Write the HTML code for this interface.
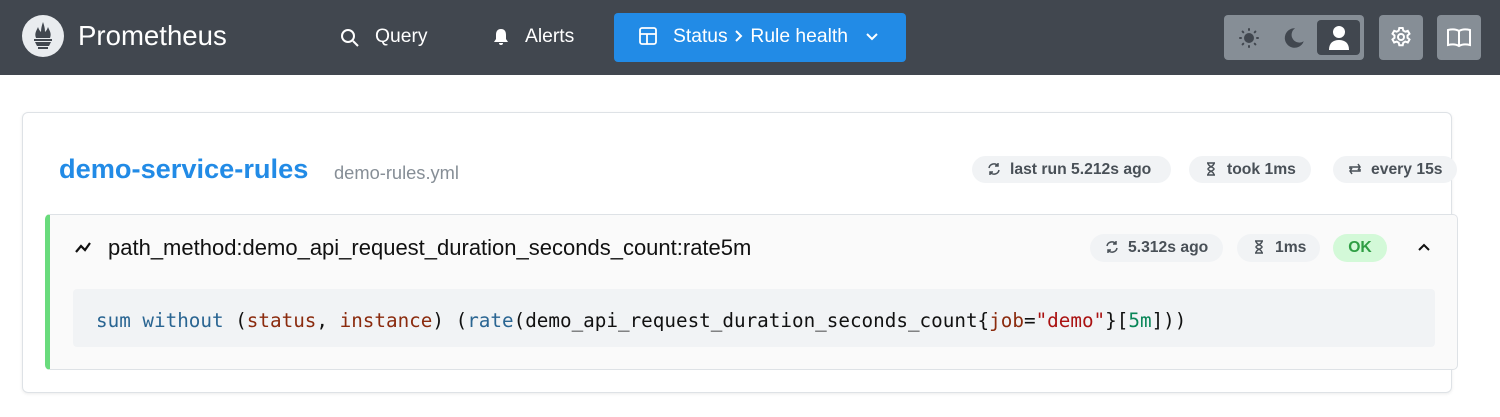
<!DOCTYPE html>
<html><head><style>
*{box-sizing:border-box;margin:0;padding:0}
body{width:1500px;height:417px;background:#fff;font-family:"Liberation Sans",sans-serif;position:relative;overflow:hidden}
.hdr{position:absolute;left:0;top:0;width:1500px;height:75px;background:#41474f}
.abs{position:absolute}
.w{color:#fff}
.pill{position:absolute;height:27px;border-radius:14px;background:#f1f3f5;color:#495057;font-weight:bold;font-size:15.7px;line-height:27px;padding:0 0 0 38px}
.pill svg{position:absolute;left:15px;top:6px}
code{font-family:"DejaVu Sans Mono","Liberation Mono",monospace}
</style></head><body>
<div class="hdr"></div>
<svg class="abs" style="left:22px;top:15px" width="42" height="42" viewBox="0 0 42 42"><circle cx="21" cy="21" r="21" fill="#e9ecef"/><path d="M13 27h16l-2 4H15z M12 24h18v2H12z M16 32h10v2H16z" fill="#41474f"/><path d="M14 23c-2-5 1-8 2-11 1 3 2 4 3 5 0-4 1-7 2-10 1 3 2 6 2 10 1-1 2-2 3-5 1 3 4 6 2 11z" fill="#41474f"/></svg>
<div class="abs w" style="left:78px;top:20px;font-size:27.6px">Prometheus</div>
<svg class="abs" style="left:339px;top:27px" width="22" height="22" viewBox="0 0 22 22" fill="none" stroke="#fff" stroke-width="2"><circle cx="9" cy="9" r="6"/><path d="M14 14l5 5"/></svg>
<div class="abs w" style="left:375px;top:26px;font-size:19.3px">Query</div>
<svg class="abs" style="left:491px;top:27px" width="20" height="20" viewBox="0 0 20 20"><path d="M10 2c-4 0-5 3-5 6v4l-2 3h14l-2-3V8c0-3-1-6-5-6zM8 16h4a2 2 0 0 1-4 0z" fill="#fff"/></svg>
<div class="abs w" style="left:525px;top:26px;font-size:19.3px">Alerts</div>
<div class="abs" style="left:614px;top:13px;width:292px;height:49px;background:#228be6;border-radius:4px"></div>
<svg class="abs" style="left:638px;top:26px" width="20" height="20" viewBox="0 0 20 20" fill="none" stroke="#fff" stroke-width="1.8"><rect x="2" y="2" width="16" height="16" rx="2"/><path d="M2 8h16M9 8v10"/></svg>
<div class="abs w" style="left:673px;top:26px;font-size:19.3px">Status <svg width="12" height="14" viewBox="0 0 12 14" fill="none" stroke="#fff" stroke-width="2" style="vertical-align:-1px"><path d="M3 2l5 5-5 5"/></svg> Rule health</div>
<svg class="abs" style="left:864px;top:30px" width="16" height="14" viewBox="0 0 16 14" fill="none" stroke="#fff" stroke-width="2"><path d="M3 4l5 5 5-5"/></svg>
<div class="abs" style="left:1224px;top:15px;width:140px;height:45px;background:#868e96;border-radius:4px"></div>
<div class="abs" style="left:1317px;top:20px;width:43px;height:35px;background:#41474f;border-radius:4px"></div>
<svg class="abs" style="left:1237px;top:26px" width="24" height="24" viewBox="0 0 24 24" fill="#41474f" stroke="#41474f" stroke-width="2" stroke-linecap="round"><circle cx="12" cy="12" r="4"/><path d="M12 3v1M12 20v1M3 12h1M20 12h1M5.6 5.6l.7.7M17.7 17.7l.7.7M5.6 18.4l.7-.7M17.7 6.3l.7-.7"/></svg>
<svg class="abs" style="left:1281px;top:25px" width="26" height="26" viewBox="0 0 24 24"><path d="M13 3a9 9 0 1 0 8 12 7 7 0 0 1-8-12z" fill="#41474f"/></svg>
<svg class="abs" style="left:1326px;top:24px" width="26" height="28" viewBox="0 0 26 28" fill="#fff"><circle cx="13" cy="8" r="6"/><path d="M3 26c0-7 4-10 10-10s10 3 10 10z"/></svg>
<div class="abs" style="left:1379px;top:15px;width:44px;height:45px;background:#868e96;border-radius:4px"></div>
<svg class="abs" style="left:1389px;top:25px" width="24" height="24" viewBox="0 0 24 24" fill="none" stroke="#fff" stroke-width="2"><circle cx="12" cy="12" r="3"/><path d="M10.3 3h3.4l.6 2.6 2 1.1 2.5-.9 1.7 3-2 1.7v2.3l2 1.7-1.7 3-2.5-.9-2 1.1-.6 2.6h-3.4l-.6-2.6-2-1.1-2.5.9-1.7-3 2-1.7v-2.3l-2-1.7 1.7-3 2.5.9 2-1.1z"/></svg>
<div class="abs" style="left:1437px;top:15px;width:44px;height:45px;background:#868e96;border-radius:4px"></div>
<svg class="abs" style="left:1446px;top:26px" width="26" height="22" viewBox="0 0 26 22" fill="none" stroke="#fff" stroke-width="2"><path d="M13 5c-3-2-7-2-11-1v15c4-1 8-1 11 1 3-2 7-2 11-1V4c-4-1-8-1-11 1zM13 5v15"/></svg>

<div class="abs" style="left:22px;top:112px;width:1430px;height:281px;border:1px solid #dee2e6;border-radius:6px;box-shadow:0 1px 3px rgba(0,0,0,.08)"></div>
<div class="abs" style="left:59px;top:153px;font-size:27.2px;font-weight:bold;color:#228be6">demo-service-rules</div>
<div class="abs" style="left:334px;top:162px;font-size:18.3px;color:#868e96">demo-rules.yml</div>
<div class="pill" style="left:972px;top:156px;width:199px"><svg width="14" height="14" viewBox="0 0 14 14" fill="none" stroke="#495057" stroke-width="1.5"><path d="M2 6a5 5 0 0 1 9-2M12 8a5 5 0 0 1-9 2M11 1v3H8M3 13v-3h3"/></svg>last run 5.212s ago</div>
<div class="pill" style="left:1189px;top:156px;width:122px"><svg width="14" height="14" viewBox="0 0 14 14" fill="none" stroke="#495057" stroke-width="1.5"><path d="M3 1h8M3 13h8M4 1c0 4 6 4 6 6s-6 2-6 6M10 1c0 4-6 4-6 6s6 2 6 6"/></svg>took 1ms</div>
<div class="pill" style="left:1333px;top:156px;width:124px"><svg width="14" height="14" viewBox="0 0 14 14" fill="none" stroke="#495057" stroke-width="1.5"><path d="M2 7V5h10M10 2l2 3-2 3M12 7v2H2M4 12l-2-3 2-3"/></svg>every 15s</div>

<div class="abs" style="left:45px;top:214px;width:1413px;height:156px;background:#fafafa;border:1px solid #dee2e6;border-left:5px solid #69db7c;border-radius:5px"></div>
<svg class="abs" style="left:74px;top:240px" width="18" height="14" viewBox="0 0 18 14" fill="none" stroke="#111" stroke-width="2.2"><path d="M2 12l5-6 4 4 5-7"/></svg>
<div class="abs" style="left:108px;top:235px;font-size:22px;color:#111">path_method:demo_api_request_duration_seconds_count:rate5m</div>
<div class="pill" style="left:1090px;top:234px;width:133px;height:28px;line-height:28px"><svg width="14" height="14" viewBox="0 0 14 14" fill="none" stroke="#495057" stroke-width="1.5"><path d="M2 6a5 5 0 0 1 9-2M12 8a5 5 0 0 1-9 2M11 1v3H8M3 13v-3h3"/></svg>5.312s ago</div>
<div class="pill" style="left:1237px;top:234px;width:83px;height:28px;line-height:28px"><svg width="14" height="14" viewBox="0 0 14 14" fill="none" stroke="#495057" stroke-width="1.5"><path d="M3 1h8M3 13h8M4 1c0 4 6 4 6 6s-6 2-6 6M10 1c0 4-6 4-6 6s6 2 6 6"/></svg>1ms</div>
<div class="pill" style="left:1333px;top:234px;width:54px;height:28px;line-height:28px;padding:0;text-align:center;background:#d3f9d8;color:#2f9e44">OK</div>
<svg class="abs" style="left:1416px;top:240px" width="16" height="14" viewBox="0 0 16 14" fill="none" stroke="#111" stroke-width="2"><path d="M3 10l5-5 5 5"/></svg>
<div class="abs" style="left:73px;top:289px;width:1362px;height:58px;background:#f1f3f5;border-radius:4px"></div>
<code class="abs" style="left:96px;top:309px;font-size:19.27px;color:#111;white-space:pre"><span style="color:#2a6592">sum without</span> (<span style="color:#8b2b0e">status</span>, <span style="color:#8b2b0e">instance</span>) (<span style="color:#2a6592">rate</span>(demo_api_request_duration_seconds_count{<span style="color:#8b2b0e">job</span>=<span style="color:#a11">"demo"</span>}[<span style="color:#098658">5m</span>]))</code>
</body></html>
